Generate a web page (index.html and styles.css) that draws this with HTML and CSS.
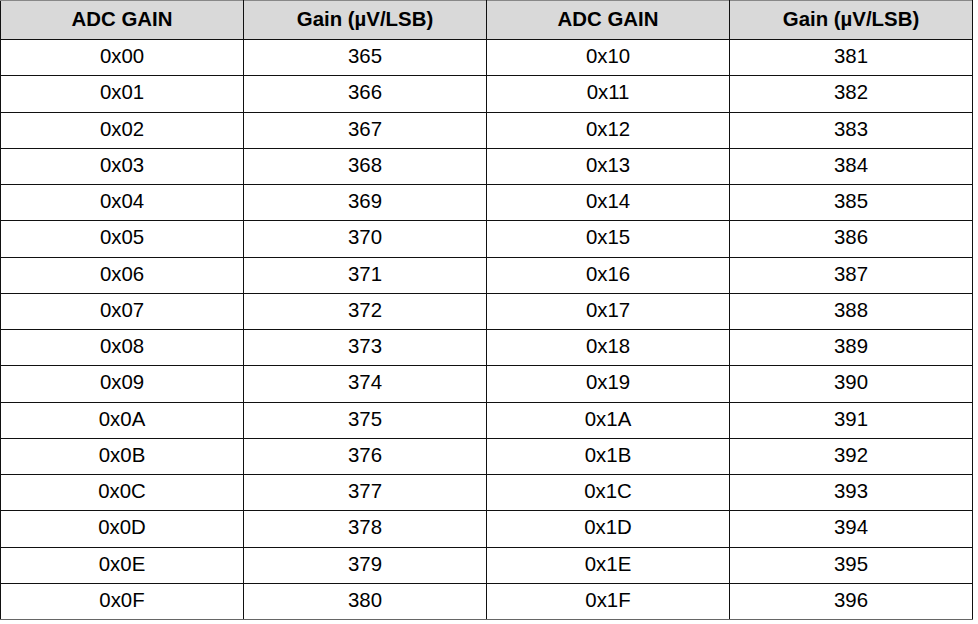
FILE: index.html
```html
<!DOCTYPE html>
<html>
<head>
<meta charset="utf-8">
<link rel="stylesheet" href="styles.css">
</head>
<body>
<table class="gain-table">
<thead>
<tr><th>ADC GAIN</th><th>Gain (µV/LSB)</th><th>ADC GAIN</th><th>Gain (µV/LSB)</th></tr>
</thead>
<tbody>
<tr><td>0x00</td><td>365</td><td>0x10</td><td>381</td></tr>
<tr><td>0x01</td><td>366</td><td>0x11</td><td>382</td></tr>
<tr><td>0x02</td><td>367</td><td>0x12</td><td>383</td></tr>
<tr><td>0x03</td><td>368</td><td>0x13</td><td>384</td></tr>
<tr><td>0x04</td><td>369</td><td>0x14</td><td>385</td></tr>
<tr><td>0x05</td><td>370</td><td>0x15</td><td>386</td></tr>
<tr><td>0x06</td><td>371</td><td>0x16</td><td>387</td></tr>
<tr><td>0x07</td><td>372</td><td>0x17</td><td>388</td></tr>
<tr><td>0x08</td><td>373</td><td>0x18</td><td>389</td></tr>
<tr><td>0x09</td><td>374</td><td>0x19</td><td>390</td></tr>
<tr><td>0x0A</td><td>375</td><td>0x1A</td><td>391</td></tr>
<tr><td>0x0B</td><td>376</td><td>0x1B</td><td>392</td></tr>
<tr><td>0x0C</td><td>377</td><td>0x1C</td><td>393</td></tr>
<tr><td>0x0D</td><td>378</td><td>0x1D</td><td>394</td></tr>
<tr><td>0x0E</td><td>379</td><td>0x1E</td><td>395</td></tr>
<tr><td>0x0F</td><td>380</td><td>0x1F</td><td>396</td></tr>
</tbody>
</table>
</body>
</html>
```
FILE: styles.css
```css
html, body {
  margin: 0;
  padding: 0;
  background: #ffffff;
}

.gain-table {
  width: 973px;
  table-layout: fixed;
  border-collapse: collapse;
  font-family: "Liberation Sans", Arial, sans-serif;
  font-size: 20.4px;
  color: #000000;
}

.gain-table th,
.gain-table td {
  border: 1px solid #111111;
  padding: 0 0 3px 0;
  text-align: center;
  vertical-align: middle;
  line-height: 22px;
}

.gain-table th {
  background: #d9d9d9;
  font-weight: bold;
  height: 39px;
  box-sizing: border-box;
}

.gain-table tr:first-child th {
  border-top-color: #888888;
}

.gain-table td {
  height: 36.25px;
  box-sizing: border-box;
}

.gain-table tbody tr:last-child td {
  border-bottom-color: #666666;
}
```
